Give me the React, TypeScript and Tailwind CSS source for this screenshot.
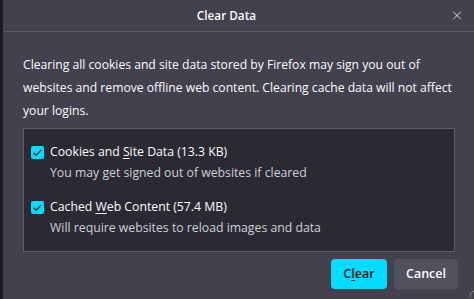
import { X } from "lucide-react";

const font = { fontFamily: '"Open Sans", "Noto Sans", sans-serif' };

function Check() {
  return (
    <span className="mt-[1px] flex h-[13px] w-[13px] shrink-0 items-center justify-center rounded-[2px] bg-[#00ddff]">
      <svg viewBox="0 0 16 16" className="h-[13px] w-[13px]">
        <path d="M3.2 8.4 L6.4 11.6 L12.8 4.4" fill="none" stroke="#2b2a33" strokeWidth="1.6" />
      </svg>
    </span>
  );
}

interface OptionProps {
  label: React.ReactNode;
  hint: string;
}

const Option = ({ label, hint }: OptionProps) => (
  <div className="flex flex-col">
    <div className="flex items-center gap-[6px]">
      <Check />
      <span className="text-[12.25px] leading-[21px] text-[#fbfbfe]">{label}</span>
    </div>
    <div className="pl-[19px] text-[12.25px] leading-[21px] text-[#cfcfd8]">{hint}</div>
  </div>
);

export default function App() {
  return (
    <div className="flex h-[299px] w-[474px] overflow-hidden bg-[#1c1b22]" style={font}>
      <div className="w-[3px] shrink-0 bg-[#1c1b22]" />
      <div className="relative flex min-w-0 flex-1 flex-col bg-[#42414d]">
        <div className="flex h-[32px] items-center border-b border-[#5a5966]">
          <div className="flex-1 text-center text-[11.75px] font-semibold text-[#fbfbfe]">Clear Data</div>
          <button className="mr-[10px] flex h-[14px] w-[14px] items-center justify-center text-[#fbfbfe]">
            <X size={15} strokeWidth={1.4} />
          </button>
        </div>

        <div className="flex min-w-0 flex-1 flex-col pl-[20px] pr-[19px] pt-[21px]">
          <p className="whitespace-nowrap text-[12.15px] leading-[23px] text-[#fbfbfe]">
            Clearing all cookies and site data stored by Firefox may sign you out of
            <br />
            websites and remove offline web content. Clearing cache data will not affect
            <br />
            your logins.
          </p>

          <div className="mt-[6px] flex flex-col gap-[13px] border border-[#5e5d69] bg-[#2b2a33] pb-[13px] pl-[7px] pt-[12px]">
            <Option
              label={<>Cookies and <u className="underline-offset-2">S</u>ite Data (13.3 KB)</>}
              hint="You may get signed out of websites if cleared"
            />
            <Option
              label={<>Cached <u className="underline-offset-2">W</u>eb Content (57.4 MB)</>}
              hint="Will require websites to reload images and data"
            />
          </div>

          <div className="mr-[-3px] mt-[7px] flex justify-end gap-[7px]">
            <button className="h-[30px] w-[56px] rounded-[4px] bg-[#00ddff] text-[12.5px] font-semibold text-[#15141a]">
              C<u className="underline-offset-2">l</u>ear
            </button>
            <button className="h-[30px] w-[64px] rounded-[4px] bg-[#52515e] text-[12.5px] font-semibold text-[#fbfbfe]">
              Cancel
            </button>
          </div>
        </div>
        <svg className="absolute bottom-0 right-0 h-[9px] w-[4px]" viewBox="0 0 4 9">
          <path d="M4 1 A7 7 0 0 0 0 8" fill="none" stroke="#8f8f9d" strokeWidth="1" />
        </svg>
      </div>
    </div>
  );
}
